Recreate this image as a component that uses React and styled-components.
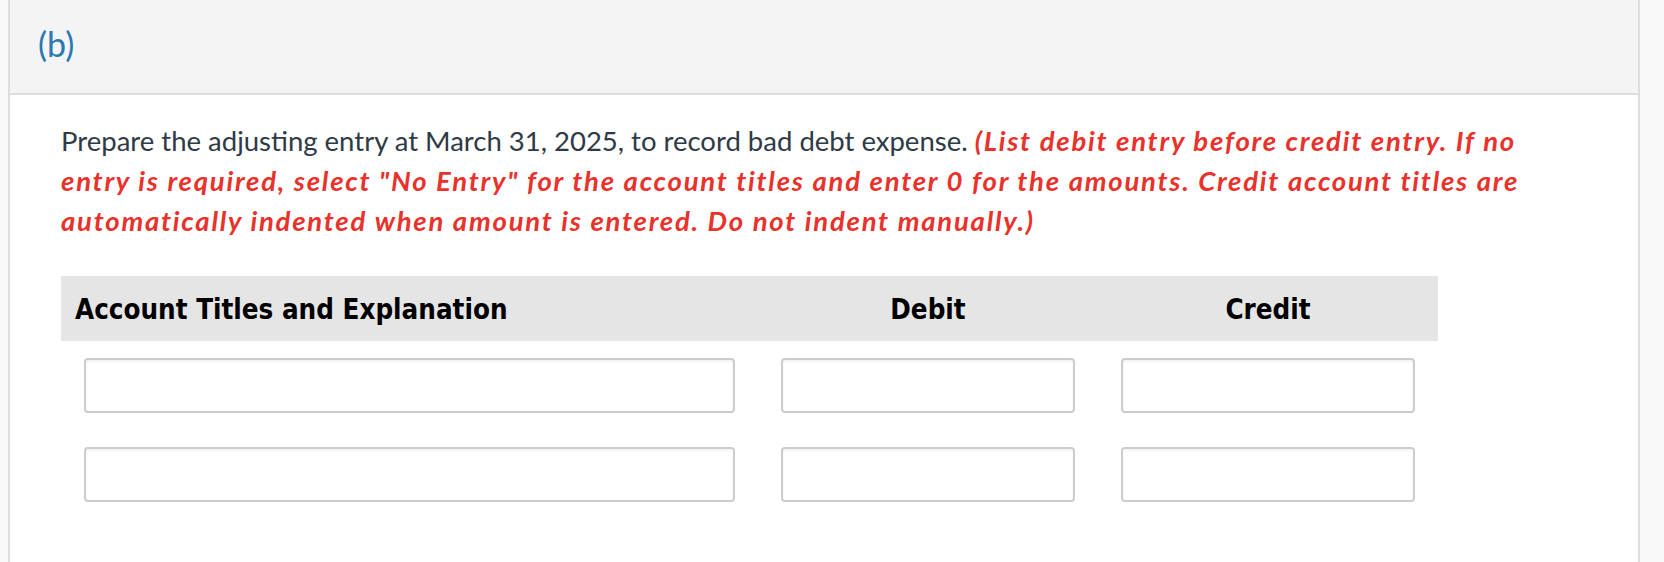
import { Fragment } from "react";
import styled, { createGlobalStyle } from "styled-components";

const GlobalStyle = createGlobalStyle`
  html, body {
    margin: 0;
    padding: 0;
    background: #f9f9f9;
  }
`;

const Page = styled.div`
  padding-left: 8px;
  height: 562px;
  overflow: hidden;
`;

const Panel = styled.div`
  width: 1632px;
  box-sizing: border-box;
  min-height: 562px;
  background: #fff;
  border-left: 2px solid #dddddd;
  border-right: 2px solid #dddddd;
`;

const PartHeader = styled.div`
  height: 87px;
  padding: 0 0 6px 28px;
  background: #f4f4f4;
  border-bottom: 2px solid #dddddd;
  display: flex;
  align-items: center;
`;

const PartLabel = styled.span`
  font-family: Lato, "Open Sans", sans-serif;
  font-size: 34px;
  color: #2b78b3;
`;

const Body = styled.div`
  padding: 26px 40px 0 51px;
`;

const Question = styled.p`
  margin: 0;
  font-family: Lato, "Open Sans", sans-serif;
  font-size: 27.5px;
  line-height: 40px;
  color: #2e3a46;
  max-width: 1500px;
`;

const Hint = styled.span`
  color: #e8322b;
  font-weight: 700;
  font-style: italic;
  letter-spacing: 1.75px;
  font-variant-ligatures: none;
`;

const EntryTable = styled.div`
  margin-top: 35px;
  width: 1377px;
  display: grid;
  grid-template-columns: 697px 340px 340px;
`;

const HeadCell = styled.div`
  height: 65px;
  background: #e5e5e5;
  display: flex;
  align-items: center;
  justify-content: ${(p) => (p.$center ? "center" : "flex-start")};
  padding-left: ${(p) => (p.$center ? "0" : "14px")};
  font-family: "DejaVu Sans Condensed", "DejaVu Sans", sans-serif;
  font-weight: 700;
  font-size: 27.5px;
  color: #000;
`;

const Cell = styled.div`
  padding: 17px 23px;
`;

const Field = styled.input`
  display: block;
  width: 100%;
  height: 55px;
  box-sizing: border-box;
  border: 2px solid #cccccc;
  border-radius: 4px;
  background: #fff;
  box-shadow: inset 0 2px 3px rgba(0, 0, 0, 0.05);
  font-family: Lato, sans-serif;
  font-size: 20px;
  padding: 0 10px;
  outline: none;
`;

const rows = [0, 1];

export default function App() {
  return (
    <>
      <GlobalStyle />
      <Page>
        <Panel>
          <PartHeader>
            <PartLabel>(b)</PartLabel>
          </PartHeader>
          <Body>
            <Question>
              Prepare the adjusting entry at March 31, 2025, to record bad debt
              expense.{" "}
              <Hint>
                (List debit entry before credit entry. If no entry is required,
                select "No Entry" for the account titles and enter 0 for the
                amounts. Credit account titles are automatically indented when
                amount is entered. Do not indent manually.)
              </Hint>
            </Question>
            <EntryTable>
              <HeadCell>Account Titles and Explanation</HeadCell>
              <HeadCell $center>Debit</HeadCell>
              <HeadCell $center>Credit</HeadCell>
              {rows.map((r) => (
                <Fragment key={r}>
                  <Cell>
                    <Field type="text" />
                  </Cell>
                  <Cell>
                    <Field type="text" />
                  </Cell>
                  <Cell>
                    <Field type="text" />
                  </Cell>
                </Fragment>
              ))}
            </EntryTable>
          </Body>
        </Panel>
      </Page>
    </>
  );
}
